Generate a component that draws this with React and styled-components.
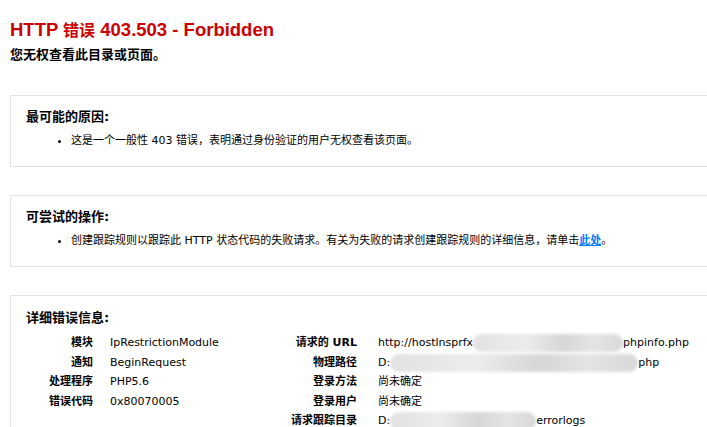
import React from 'react';
import styled, { createGlobalStyle } from 'styled-components';

const GlobalStyle = createGlobalStyle`
  html, body {
    margin: 0;
    padding: 0;
    background: #fff;
    overflow: hidden;
  }
  body {
    font-family: "DejaVu Sans", Verdana, "Noto Sans CJK SC", sans-serif;
    font-size: 11px;
    color: #000;
  }
`;

const Content = styled.div`
  padding: 0 0 0 10px;
`;

const Title = styled.h2`
  margin: 0;
  padding-top: 19px;
  font-family: "Liberation Sans", Tahoma, "Noto Sans CJK SC", sans-serif;
  font-size: 18.5px;
  line-height: 20px;
  font-weight: bold;
  color: #cc0000;
`;

const TitleCjk = styled.span`
  font-family: "Noto Sans CJK SC", sans-serif;
  font-size: 16px;
`;

const Subtitle = styled.h4`
  margin: 7px 0 0 0;
  font-size: 13px;
  line-height: 16px;
  font-weight: bold;
  color: #000;
`;

const Box = styled.section`
  width: 760px;
  border: 1px solid #e3e3e3;
  border-right: none;
  margin-top: ${(p) => p.$gap}px;
  padding: ${(p) => p.$top}px 15px ${(p) => p.$bottom}px 15px;
  box-sizing: border-box;
`;

const BoxTitle = styled.h4`
  margin: 0;
  font-size: 13px;
  line-height: 16px;
  font-weight: bold;
  color: #000;
`;

const List = styled.ul`
  margin: 9px 0 0 5px;
  padding-left: 40px;
  line-height: 14px;
`;

const Link = styled.a`
  color: #007eff;
  font-weight: bold;
  text-decoration: underline;
`;

const Details = styled.div`
  display: flex;
  margin-top: 7px;
`;

const DetailColumn = styled.div`
  width: ${(p) => p.$width}px;
  display: grid;
  grid-template-columns: ${(p) => p.$label}px 1fr;
  column-gap: ${(p) => p.$gap}px;
  align-content: start;
`;

const Label = styled.div`
  text-align: right;
  font-weight: bold;
  line-height: 13.5px;
  padding: 3px 0;
  white-space: nowrap;
`;

const Value = styled.div`
  line-height: 13.5px;
  padding: 3px 0;
  white-space: nowrap;
`;

const Blur = styled.span`
  display: inline-block;
  vertical-align: middle;
  width: ${(p) => p.$width}px;
  height: 18px;
  margin: -4px 0;
  border-radius: 9px;
  background: linear-gradient(90deg, #e2e2e2, #ececec 35%, #d6d6d6 60%, #e4e4e4 80%, #d8d8d8);
  filter: blur(1.5px);
`;

const leftRows = [
  ['模块', 'IpRestrictionModule'],
  ['通知', 'BeginRequest'],
  ['处理程序', 'PHP5.6'],
  ['错误代码', '0x80070005'],
];

export default function App() {
  return (
    <>
      <GlobalStyle />
      <Content>
        <Title>
          HTTP <TitleCjk>错误</TitleCjk> 403.503 - Forbidden
        </Title>
        <Subtitle>您无权查看此目录或页面。</Subtitle>

        <Box $gap={32} $top={13} $bottom={18}>
          <BoxTitle>最可能的原因:</BoxTitle>
          <List>
            <li>这是一个一般性 403 错误，表明通过身份验证的用户无权查看该页面。</li>
          </List>
        </Box>

        <Box $gap={28} $top={13} $bottom={18}>
          <BoxTitle>可尝试的操作:</BoxTitle>
          <List>
            <li>
              创建跟踪规则以跟踪此 HTTP 状态代码的失败请求。有关为失败的请求创建跟踪规则的详细信息，请单击
              <Link href="#">此处</Link>。
            </li>
          </List>
        </Box>

        <Box $gap={28} $top={14} $bottom={20}>
          <BoxTitle>详细错误信息:</BoxTitle>
          <Details>
            <DetailColumn $width={244} $label={67} $gap={17}>
              {leftRows.map(([k, v]) => (
                <React.Fragment key={k}>
                  <Label>{k}</Label>
                  <Value>{v}</Value>
                </React.Fragment>
              ))}
            </DetailColumn>
            <DetailColumn $width={420} $label={87} $gap={21}>
              <Label>请求的 URL</Label>
              <Value>
                http://hostlnsprfx<Blur $width={150} />phpinfo.php
              </Value>
              <Label>物理路径</Label>
              <Value>
                D:<Blur $width={248} />php
              </Value>
              <Label>登录方法</Label>
              <Value>尚未确定</Value>
              <Label>登录用户</Label>
              <Value>尚未确定</Value>
              <Label>请求跟踪目录</Label>
              <Value>
                D:<Blur $width={146} />errorlogs
              </Value>
            </DetailColumn>
          </Details>
        </Box>
      </Content>
    </>
  );
}
